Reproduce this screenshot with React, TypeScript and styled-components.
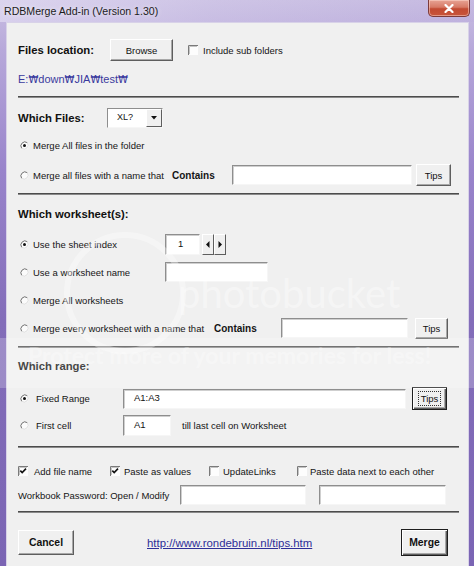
import React from 'react';
import styled, { createGlobalStyle, css } from 'styled-components';

const Global = createGlobalStyle`
  html, body { margin: 0; padding: 0; }
  body {
    width: 474px;
    height: 566px;
    overflow: hidden;
    font-family: "Liberation Sans", Arial, sans-serif;
  }
`;

const Frame = styled.div`
  position: relative;
  width: 474px;
  height: 566px;
  overflow: hidden;
  display: flex;
  flex-direction: column;
  background: linear-gradient(180deg, #c9bfe2 0px, #b7a8da 50px, #9984cb 170px, #836db9 320px, #7b65b4 566px);
`;

const TitleBar = styled.div`
  height: 22px;
  flex-shrink: 0;
  display: flex;
  align-items: flex-start;
  justify-content: space-between;
  padding: 0 4px;
  background: linear-gradient(90deg, rgba(235, 230, 248, 0.55) 0%, rgba(220, 212, 240, 0.25) 45%, rgba(170, 145, 215, 0.1) 100%);
`;

const Title = styled.div`
  margin-top: 5px;
  font-size: 10.6px;
  color: #1c1c1c;
  line-height: 12px;
  text-shadow: 0 0 5px rgba(255, 255, 255, 0.8);
`;

const CloseBtn = styled.div`
  width: 42px;
  height: 17px;
  box-sizing: border-box;
  border: 1px solid #7d3b3b;
  border-top: none;
  border-radius: 0 0 5px 5px;
  background: linear-gradient(180deg, #e7a394 0%, #d77a66 45%, #c24a32 55%, #c8553b 100%);
  box-shadow: inset 0 0 0 1px rgba(255, 220, 210, 0.5);
  display: flex;
  align-items: center;
  justify-content: center;
`;

const Body = styled.div`
  flex: 1;
  margin: 0 5px 0 6px;
  background: #f0f0f0;
  border: 1px solid #d8d2e8;
  border-bottom: none;
  padding: 0 9px 0 11px;
  display: flex;
  flex-direction: column;
  color: #151515;
  font-size: 9.5px;
`;

const Row = styled.div<{ $mt: number; $h: number }>`
  display: flex;
  align-items: center;
  flex-shrink: 0;
  margin-top: ${(p) => p.$mt}px;
  height: ${(p) => p.$h}px;
  white-space: nowrap;
`;

const Divider = styled.div<{ $mt: number }>`
  flex-shrink: 0;
  margin-top: ${(p) => p.$mt}px;
  height: 2px;
  background: linear-gradient(180deg, #4c4c4c 0 1px, #8a8a8a 1px 2px);
`;

const Heading = styled.div<{ $w?: number }>`
  font-weight: bold;
  font-size: 11.3px;
  color: #111;
  width: ${(p) => (p.$w ? `${p.$w}px` : 'auto')};
  flex-shrink: 0;
`;

const Bold = styled.div<{ $w: number }>`
  font-weight: bold;
  font-size: 10px;
  width: ${(p) => p.$w}px;
  flex-shrink: 0;
`;

const Label = styled.div<{ $w?: number; $ml?: number }>`
  width: ${(p) => (p.$w ? `${p.$w}px` : 'auto')};
  margin-left: ${(p) => p.$ml ?? 0}px;
  flex-shrink: 0;
`;

const PathText = styled.div`
  color: #3a3a9e;
  font-size: 11px;
  display: flex;
  align-items: baseline;
`;

const Won = styled.span`
  font-family: "DejaVu Sans", sans-serif;
  font-size: 10px;
`;

const Option = styled.div<{ $w?: number; $gap?: number; $ml?: number }>`
  display: flex;
  align-items: center;
  gap: ${(p) => p.$gap ?? 4}px;
  width: ${(p) => (p.$w ? `${p.$w}px` : 'auto')};
  margin-left: ${(p) => p.$ml ?? 0}px;
  flex-shrink: 0;
`;

const Btn = styled.div<{ $w: number; $h: number; $ml?: number; $default?: boolean; $bold?: boolean }>`
  width: ${(p) => p.$w}px;
  height: ${(p) => p.$h}px;
  margin-left: ${(p) => p.$ml ?? 0}px;
  box-sizing: border-box;
  flex-shrink: 0;
  display: flex;
  align-items: center;
  justify-content: center;
  background: #f0f0f0;
  color: #111;
  font-size: ${(p) => (p.$bold ? 10.4 : 9.5)}px;
  font-weight: ${(p) => (p.$bold ? 'bold' : 'normal')};
  border: 1px solid;
  border-color: #ffffff #5e5e5e #5e5e5e #ffffff;
  box-shadow: inset -1px -1px 0 #a8a8a8;
  ${(p) =>
    p.$default &&
    css`
      border-color: #1e1e1e;
      box-shadow: inset 1px 1px 0 #ffffff, inset -1px -1px 0 #5e5e5e, inset -2px -2px 0 #a8a8a8;
    `}
`;

const Focus = styled.span`
  outline: 1px dotted #333;
  outline-offset: 1px;
  padding: 0 1px;
`;

const Field = styled.div<{ $w: number; $h: number; $ml?: number; $pl?: number }>`
  width: ${(p) => p.$w}px;
  height: ${(p) => p.$h}px;
  margin-left: ${(p) => p.$ml ?? 0}px;
  padding-left: ${(p) => p.$pl ?? 4}px;
  box-sizing: border-box;
  flex-shrink: 0;
  background: #fff;
  border: 1px solid;
  border-color: #8e8e8e #f6f6f6 #f6f6f6 #8e8e8e;
  box-shadow: inset 1px 1px 0 #cfcfcf;
  display: flex;
  align-items: center;
  padding-bottom: 2px;
  color: #111;
`;

const Combo = styled.div`
  width: 56px;
  height: 20px;
  box-sizing: border-box;
  flex-shrink: 0;
  background: #fff;
  border: 1px solid;
  border-color: #8e8e8e #f6f6f6 #f6f6f6 #8e8e8e;
  display: flex;
  align-items: stretch;
`;

const ComboText = styled.div`
  flex: 1;
  padding-left: 9px;
  padding-top: 3px;
  font-size: 9px;
`;

const ArrowBtn = styled.div<{ $w: number }>`
  width: ${(p) => p.$w}px;
  box-sizing: border-box;
  background: #f0f0f0;
  border: 1px solid;
  border-color: #ffffff #5e5e5e #5e5e5e #ffffff;
  display: flex;
  align-items: center;
  justify-content: center;
`;

const Spin = styled.div`
  display: flex;
  height: 21px;
  margin-left: 2px;
`;

const Link = styled.a`
  margin-left: 73px;
  font-size: 11.4px;
  color: #2e2e98;
  text-decoration: underline;
`;

const Spacer = styled.div`
  flex: 1;
`;

const Band = styled.div`
  position: absolute;
  left: 0;
  right: 0;
  top: 338px;
  height: 50px;
  background: rgba(255, 255, 255, 0.22);
  pointer-events: none;
  overflow: hidden;
`;

const BandText = styled.div`
  position: absolute;
  left: 28px;
  top: 3px;
  font-family: "Lato", "Liberation Sans", sans-serif;
  font-weight: bold;
  font-size: 23px;
  color: rgba(255, 255, 255, 0.32);
  white-space: nowrap;
`;

const Logo = styled.div`
  position: absolute;
  left: 60px;
  top: 228px;
  display: flex;
  align-items: center;
  pointer-events: none;
`;

const LogoText = styled.div`
  font-family: "Lato", "Liberation Sans", sans-serif;
  font-size: 40px;
  color: rgba(255, 255, 255, 0.38);
  margin-left: -12px;
`;

const Radio = ({ on }: { on?: boolean }) => (
  <svg width="9" height="9" viewBox="0 0 9 9" style={{ flexShrink: 0, marginLeft: 2 }}>
    <circle cx="4.5" cy="4.5" r="4" fill="#fbfbfb" />
    <path d="M1.7 7.3 A4 4 0 0 1 7.3 1.7" stroke="#6e6e6e" strokeWidth="1" fill="none" />
    <path d="M7.3 1.7 A4 4 0 0 1 1.7 7.3" stroke="#dedede" strokeWidth="1" fill="none" />
    {on && <circle cx="4.5" cy="4.5" r="1.5" fill="#111" />}
  </svg>
);

const Check = ({ on }: { on?: boolean }) => (
  <svg width="10" height="10" viewBox="0 0 10 10" style={{ flexShrink: 0 }}>
    <rect x="0" y="0" width="10" height="10" fill="#fdfdfd" />
    <path d="M0.5 10 V0.5 H10" stroke="#7a7a7a" strokeWidth="1" fill="none" />
    <path d="M1.5 9 V1.5 H9" stroke="#c4c4c4" strokeWidth="1" fill="none" />
    {on && <path d="M2.3 4.6 L4.2 6.6 L8 2.6" stroke="#111" strokeWidth="1.6" fill="none" />}
  </svg>
);

const DownArrow = () => (
  <svg width="6" height="4" viewBox="0 0 6 4">
    <path d="M0 0 H6 L3 3.5 Z" fill="#111" />
  </svg>
);

const SideArrow = ({ dir }: { dir: 'l' | 'r' }) => (
  <svg width="4" height="7" viewBox="0 0 4 7">
    <path d={dir === 'l' ? 'M3.5 0 V7 L0 3.5 Z' : 'M0.5 0 V7 L4 3.5 Z'} fill="#111" />
  </svg>
);

const CloseX = () => (
  <svg width="10" height="9" viewBox="0 0 10 9">
    <path d="M1.5 1 L8.5 8 M8.5 1 L1.5 8" stroke="#fff" strokeWidth="2.2" strokeLinecap="round" />
  </svg>
);

const Path = () => (
  <PathText>
    E:<Won>₩</Won>down<Won>₩</Won>JIA<Won>₩</Won>test<Won>₩</Won>
  </PathText>
);

export default function App() {
  return (
    <Frame>
      <Global />
      <TitleBar>
        <Title>RDBMerge Add-in (Version 1.30)</Title>
        <CloseBtn>
          <CloseX />
        </CloseBtn>
      </TitleBar>
      <Body>
        <Row $mt={16} $h={22}>
          <Heading $w={92}>Files location:</Heading>
          <Btn $w={63} $h={22}>Browse</Btn>
          <Option $ml={15} $gap={5}>
            <Check />
            <span>Include sub folders</span>
          </Option>
        </Row>
        <Row $mt={10} $h={16}>
          <Path />
        </Row>
        <Divider $mt={9} />

        <Row $mt={10} $h={20}>
          <Heading $w={89}>Which Files:</Heading>
          <Combo>
            <ComboText>XL?</ComboText>
            <ArrowBtn $w={16}>
              <DownArrow />
            </ArrowBtn>
          </Combo>
        </Row>
        <Row $mt={9} $h={16}>
          <Option>
            <Radio on />
            <span>Merge All files in the folder</span>
          </Option>
        </Row>
        <Row $mt={11} $h={22}>
          <Option $w={154}>
            <Radio />
            <span>Merge all files with a name that</span>
          </Option>
          <Bold $w={60}>Contains</Bold>
          <Field $w={180} $h={20} />
          <Btn $w={35} $h={22} $ml={4}>Tips</Btn>
        </Row>
        <Divider $mt={7} />

        <Row $mt={11} $h={16}>
          <Heading>Which worksheet(s):</Heading>
        </Row>
        <Row $mt={11} $h={22}>
          <Option $w={147}>
            <Radio on />
            <span>Use the sheet index</span>
          </Option>
          <Field $w={35} $h={21} $pl={12}>1</Field>
          <Spin>
            <ArrowBtn $w={12}>
              <SideArrow dir="l" />
            </ArrowBtn>
            <ArrowBtn $w={12}>
              <SideArrow dir="r" />
            </ArrowBtn>
          </Spin>
        </Row>
        <Row $mt={7} $h={20}>
          <Option $w={147}>
            <Radio />
            <span>Use a worksheet name</span>
          </Option>
          <Field $w={103} $h={20} />
        </Row>
        <Row $mt={10} $h={16}>
          <Option>
            <Radio />
            <span>Merge All worksheets</span>
          </Option>
        </Row>
        <Row $mt={10} $h={20}>
          <Option $w={196}>
            <Radio />
            <span>Merge every worksheet with a name that</span>
          </Option>
          <Bold $w={67}>Contains</Bold>
          <Field $w={127} $h={20} />
          <Btn $w={33} $h={21} $ml={7}>Tips</Btn>
        </Row>
        <Divider $mt={8} />

        <Row $mt={10} $h={16}>
          <Heading>Which range:</Heading>
        </Row>
        <Row $mt={13} $h={23}>
          <Option $w={105} $gap={7}>
            <Radio on />
            <span>Fixed Range</span>
          </Option>
          <Field $w={283} $h={20} $pl={10}>A1:A3</Field>
          <Btn $w={35} $h={23} $ml={6} $default>
            <Focus>Tips</Focus>
          </Btn>
        </Row>
        <Row $mt={5} $h={21}>
          <Option $w={105} $gap={7}>
            <Radio />
            <span>First cell</span>
          </Option>
          <Field $w={48} $h={21} $pl={10}>A1</Field>
          <Label $ml={11}>till last cell on Worksheet</Label>
        </Row>
        <Divider $mt={10} />

        <Row $mt={15} $h={16}>
          <Option $w={92} $gap={6}>
            <Check on />
            <span>Add file name</span>
          </Option>
          <Option $w={99} $gap={4}>
            <Check on />
            <span>Paste as values</span>
          </Option>
          <Option $w={88} $gap={4}>
            <Check />
            <span>UpdateLinks</span>
          </Option>
          <Option $gap={3}>
            <Check />
            <span>Paste data next to each other</span>
          </Option>
        </Row>
        <Row $mt={6} $h={20}>
          <Label $w={162}>Workbook Password: Open / Modify</Label>
          <Field $w={126} $h={20} />
          <Field $w={127} $h={20} $ml={13} />
        </Row>
        <Divider $mt={6} />

        <Row $mt={16} $h={27}>
          <Btn $w={56} $h={25} $bold>Cancel</Btn>
          <Link href="#">http://www.rondebruin.nl/tips.htm</Link>
          <Spacer />
          <Btn $w={47} $h={27} $bold $default>Merge</Btn>
          <Label $w={11} />
        </Row>
      </Body>

      <Logo>
        <svg width="130" height="130" viewBox="0 0 130 130">
          <circle cx="65" cy="65" r="58" stroke="rgba(255,255,255,0.35)" strokeWidth="6" fill="none" />
        </svg>
        <LogoText>photobucket</LogoText>
      </Logo>
      <Band>
        <BandText>Protect more of your memories for less!</BandText>
      </Band>
    </Frame>
  );
}
